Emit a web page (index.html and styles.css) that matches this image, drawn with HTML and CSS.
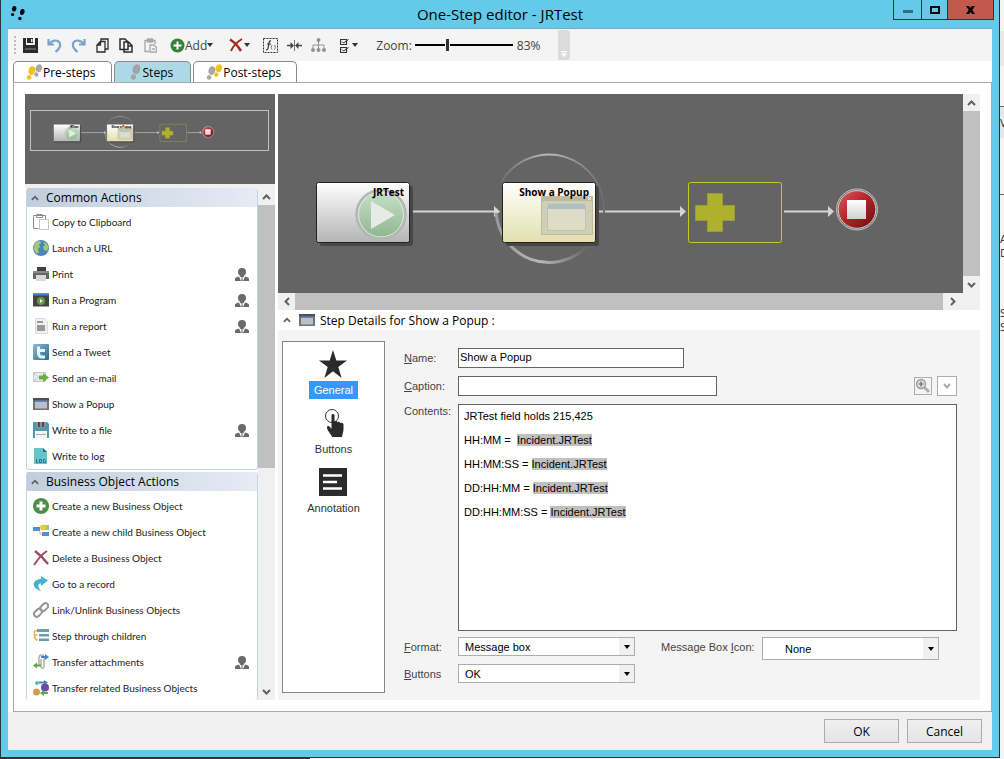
FILE: index.html
```html
<!DOCTYPE html>
<html lang="en">
<head>
<meta charset="utf-8">
<title>One-Step editor - JRTest</title>
<link rel="stylesheet" href="styles.css">
</head>
<body>
<svg class="defs" aria-hidden="true">
  <defs>
    <linearGradient id="g-grey" x1="0" y1="0" x2="0" y2="1"><stop offset="0" stop-color="#fff"/><stop offset="1" stop-color="#b4b4b4"/></linearGradient>
    <linearGradient id="g-cream" x1="0" y1="0" x2="0" y2="1"><stop offset="0" stop-color="#fff"/><stop offset="1" stop-color="#e2dfae"/></linearGradient>
    <linearGradient id="g-green" x1="0" y1="0" x2="0" y2="1"><stop offset="0" stop-color="#c8e2c9"/><stop offset="1" stop-color="#8fb590"/></linearGradient>
    <linearGradient id="g-red" x1="0" y1="0" x2="1" y2="1"><stop offset="0" stop-color="#e0575a"/><stop offset=".5" stop-color="#b02226"/><stop offset="1" stop-color="#6d0a0c"/></linearGradient>
    <linearGradient id="g-stop" x1="0" y1="0" x2="0" y2="1"><stop offset="0" stop-color="#fff"/><stop offset="1" stop-color="#cdd2cf"/></linearGradient>
    <linearGradient id="g-top" x1="0" y1="0" x2="1" y2="0"><stop offset="0" stop-color="#707070"/><stop offset=".45" stop-color="#bbb"/><stop offset="1" stop-color="#6c6c6c"/></linearGradient>
    <linearGradient id="g-bot" x1="0" y1="0" x2="1" y2="0"><stop offset="0" stop-color="#999"/><stop offset=".5" stop-color="#b8b8b8"/><stop offset="1" stop-color="#666"/></linearGradient>
    <linearGradient id="g-tw" x1="0" y1="0" x2="1" y2="1"><stop offset="0" stop-color="#8fb9cf"/><stop offset="1" stop-color="#2b6c8e"/></linearGradient>
    <symbol id="foot" viewBox="0 0 10 16"><ellipse cx="6" cy="5.2" rx="3.8" ry="5" transform="rotate(18 6 5.2)"/><ellipse cx="2.9" cy="13" rx="2.6" ry="2.7" transform="rotate(18 2.9 13)"/></symbol>
    <symbol id="person" viewBox="0 0 14 13"><circle cx="7" cy="4" r="4"/><path d="M5 7h4v1.500L7 10 5 8.500zM0 13v-2c0-1.500 1.500-2 4-2.500L6 13zM14 13v-2c0-1.500-1.500-2-4-2.500L8 13zM6.600 10h.8l.4 3H6.200z"/></symbol>
    <symbol id="chev-up" viewBox="0 0 9 6"><path d="M1 5 4.500 1.500 8 5" fill="none" stroke="#606060" stroke-width="2"/></symbol>
    <symbol id="chev-down" viewBox="0 0 9 6"><path d="M1 1l3.500 3.500L8 1" fill="none" stroke="#606060" stroke-width="2"/></symbol>
    <symbol id="caret" viewBox="0 0 6 4"><path d="M0 0h6L3 4z"/></symbol>
    <symbol id="window" viewBox="0 0 16 12"><rect width="16" height="12" fill="#6f7378"/><rect width="16" height="2.500" fill="#4d5156"/><rect x="2" y="3.500" width="12" height="7" fill="#b9bfc8"/><rect x="2" y="2.500" width="12" height="1.300" fill="#5b83b8"/></symbol>
    <g id="flow">
      <path d="M134 117.500h84M320 117.500h84M506 117.500h46" stroke="#d4d4d4" stroke-width="2"/>
      <path d="M216 112l6 5.500-6 5.500zM402 112l6 5.500-6 5.500zM550 112l6 5.500-6 5.500z" fill="#d4d4d4"/>
      <path d="M223.400 88A55 55 0 0 1 325.900 119" fill="none" stroke="url(#g-top)" stroke-width="2"/>
      <path d="M218.200 119A53 53 0 0 0 308.500 153" fill="none" stroke="url(#g-bot)" stroke-width="3"/>
      <rect x="42" y="92" width="93" height="60" rx="2" fill="#474747"/>
      <rect x="38.500" y="88.500" width="93" height="60" rx="2" fill="url(#g-grey)" stroke="#222"/>
      <circle cx="103" cy="120.500" r="24.500" fill="url(#g-green)" stroke="#b4b7b4" stroke-width="2.500"/>
      <circle cx="103" cy="120.500" r="22.500" fill="none" stroke="#e3e9e3" stroke-width="1"/>
      <path d="M93 107v28l24-14z" fill="#e8eae8"/>
      <text x="126" y="102" class="flow-label">JRTest</text>
      <rect x="228" y="92" width="93" height="60" rx="2" fill="#474747"/>
      <rect x="224.500" y="88.500" width="93" height="60" rx="2" fill="url(#g-cream)" stroke="#222"/>
      <rect x="263.500" y="102.500" width="51" height="38" fill="#d1cfb3" stroke="#bcbaa2"/>
      <rect x="264" y="102" width="50" height="5" fill="#babaa4"/>
      <path d="M310 103l3 3m0-3l-3 3" stroke="#fff"/>
      <rect x="269.500" y="110.500" width="38" height="26" rx="2" fill="#dedcc4" stroke="#b7c4c0"/>
      <rect x="270" y="110" width="37" height="5" fill="#adbfc2"/>
      <text x="311" y="102" class="flow-label">Show a Popup</text>
      <rect x="410.500" y="88.500" width="93" height="60" rx="2" fill="none" stroke="#c9c924"/>
      <path d="M429.500 99.500h15v12h12v15h-12v11h-15v-11h-12v-15h12z" fill="#b0b02f" stroke="#9c9c35"/>
      <circle cx="579" cy="115.500" r="20.500" fill="#777" stroke="#bdbdbd"/>
      <circle cx="579" cy="115.500" r="18.800" fill="url(#g-red)" stroke="#ccc"/>
      <rect x="569" y="106" width="19" height="19" fill="url(#g-stop)"/>
    </g>
  </defs>
</svg>

<div class="desktop">
<div class="window">
  <header class="titlebar">
    <svg class="app-icon" width="14" height="15" viewBox="0 0 14 15"><ellipse cx="3.200" cy="2.800" rx="2.200" ry="2.800" transform="rotate(14 3.200 2.800)"/><circle cx="1.600" cy="8.500" r="1.600"/><ellipse cx="11.300" cy="6" rx="2.200" ry="3" transform="rotate(14 11.300 6)"/><circle cx="8.900" cy="12.500" r="1.700"/></svg>
    <h1>One-Step editor - JRTest</h1>
    <div class="win-buttons">
      <button class="wb min" aria-label="Minimize"><svg width="10" height="8" viewBox="0 0 10 8"><path d="M0 4h10v3H0z" fill="#376b7e"/></svg></button>
      <button class="wb max" aria-label="Maximize"><svg width="10" height="8" viewBox="0 0 10 8"><path d="M1 1h8v6H1z" fill="none" stroke="#000" stroke-width="2"/></svg></button>
      <button class="wb close" aria-label="Close"><svg width="9" height="8" viewBox="0 0 9 8"><path d="M0 0h3l1.500 2L6 0h3L6.200 4 9 8H6L4.500 6 3 8H0l2.800-4z"/></svg></button>
    </div>
  </header>

  <div class="client">
    <div class="toolbar" role="toolbar" aria-label="Editor">
      <span class="grip"></span>
      <button class="tool" aria-label="Save"><svg width="15" height="15" viewBox="0 0 15 15"><path d="M0 0h3v7h9V0h3v15H0z" fill="#2b2b2b"/><path d="M4 0h6v5H4z" fill="#2b2b2b"/><path d="M8 1h1.500v3H8z" fill="#eee"/><path d="M2 10.500h11v1H2z" fill="#888"/></svg></button>
      <button class="tool" aria-label="Undo"><svg width="15" height="15" viewBox="0 0 15 15" fill="none" stroke="#7ba3ca" stroke-width="2.200"><path d="M1.500 1v5.500H7M2 6.200C5 2.500 10 1 12.500 4.500 14.500 8 11.500 11.500 8.500 14"/></svg></button>
      <button class="tool" aria-label="Redo"><svg width="15" height="15" viewBox="0 0 15 15" fill="none" stroke="#7ba3ca" stroke-width="2.200"><path d="M13.500 1v5.500H8M13 6.200C10 2.500 5 1 2.500 4.500.5 8 3.500 11.500 6.500 14"/></svg></button>
      <button class="tool" aria-label="Duplicate"><svg width="13" height="15" viewBox="0 0 13 15" fill="none" stroke="#2b2b2b" stroke-width="1.300"><path d="M5 3V1h7v10H9.500M4.500 3.500H9V14H1V7zM1 7h3.500V3.500"/></svg></button>
      <button class="tool" aria-label="Copy"><svg width="14" height="15" viewBox="0 0 14 15" fill="#f4f4f4" stroke="#2b2b2b" stroke-width="1.500"><path d="M1 1h5l3 3v7.500H1zM5 4h4.500L13 7.500V14H5zM9 4v4h4"/></svg></button>
      <button class="tool" aria-label="Paste"><svg width="13" height="15" viewBox="0 0 13 15" fill="none" stroke="#a9a9a9" stroke-width="1.400"><path d="M5 13.500H1V2.500h10V6M3.500 1h5v3h-5zM6 7h4l2.500 2.500V14H6zM8 11h3"/></svg></button>
      <button class="tool add"><svg width="15" height="15" viewBox="0 0 15 15"><circle cx="7.500" cy="7.500" r="7" fill="#338336"/><path d="M7.500 3.500v8M3.500 7.500h8" stroke="#fff" stroke-width="2"/></svg>Add<svg width="6" height="4"><use href="#caret"/></svg></button>
      <button class="tool del" aria-label="Delete"><svg width="14" height="14" viewBox="0 0 14 14" fill="none" stroke="#a02c1b"><path d="M1 1.500C5 4 9 8 12 13" stroke-width="2.500"/><path d="M13 1C8 4 4 8 2 13" stroke-width="2"/></svg><svg width="6" height="4"><use href="#caret"/></svg></button>
      <button class="tool fx" aria-label="Insert function"><svg width="15" height="15" viewBox="0 0 15 15" fill="none" stroke="#333"><path d="M.5.500h14v14H.5z" stroke-dasharray="2 1"/><path d="M8 3C6 2.500 6 5 5.500 8S5 12 3 12M4 6h4" stroke-width="1.200"/><path d="M9 7c-1 1.500-1 3 0 4.500M11.500 7c1 1.500 1 3 0 4.500" stroke="#777"/></svg></button>
      <button class="tool" aria-label="Collapse"><svg width="15" height="11" viewBox="0 0 15 11"><path d="M0 5.500h5M10 5.500h5" stroke="#444" stroke-width="1.500"/><path d="M3.500 2v7L7 5.500zM11.500 2v7L8 5.500z" fill="#444"/><path d="M7.500 0v11" stroke="#777"/></svg></button>
      <button class="tool" aria-label="Hierarchy"><svg width="15" height="14" viewBox="0 0 15 14" fill="#929292"><circle cx="7.500" cy="2" r="2"/><circle cx="2" cy="12" r="2"/><circle cx="7.500" cy="12" r="2"/><circle cx="13" cy="12" r="2"/><path d="M7.500 3v8M2 11V7h11v4" fill="none" stroke="#929292"/></svg></button>
      <button class="tool opts" aria-label="Options"><svg width="9" height="15" viewBox="0 0 9 15" fill="none" stroke="#333"><path d="M.5 1.500h6v5h-6zM.5 9.500h6v5h-6z" stroke-width="1.200"/><path d="M2 3.500l1.500 1.500 5-3.500M2 11.500L3.500 13l5-3.500"/></svg><svg width="6" height="4"><use href="#caret"/></svg></button>
      <label class="zoom">Zoom: <input type="range" min="0" max="100" value="32"></label>
      <output class="pct">83%</output>
      <button class="overflow" aria-label="More tools"><svg width="6" height="6" viewBox="0 0 6 6" fill="#fff"><path d="M0 0h6v1.300H0zM0 2.500h6L3 6z"/></svg></button>
    </div>

    <nav class="tabs" role="tablist">
      <button class="tab pre" role="tab"><svg width="17" height="16" viewBox="0 0 17 16"><use href="#foot" x="7" y="0" width="10" height="13" fill="#a9a9a9"/><use href="#foot" x="0" y="2" width="10" height="14" fill="#f3c11b"/></svg>Pre-steps</button>
      <button class="tab active" role="tab" aria-selected="true"><svg width="11" height="16" viewBox="0 0 10 16" fill="#a3a3a3"><use href="#foot" width="10" height="16"/></svg><span>Steps</span></button>
      <button class="tab post" role="tab"><svg width="17" height="16" viewBox="0 0 17 16"><use href="#foot" x="0" y="2" width="10" height="14" fill="#a9a9a9"/><use href="#foot" x="7" y="0" width="10" height="13" fill="#f3c11b"/></svg>Post-steps</button>
    </nav>

    <main class="panel">
      <aside class="side">
        <svg class="minimap" role="img" aria-label="Overview"><rect x="5.500" y="16.500" width="238" height="40" fill="none" stroke="#c0c0c0"/><use href="#flow" transform="translate(17.500 5) scale(.286)"/></svg>
        <div class="list-wrap">
          <div class="list">
            <section class="group">
              <h2><svg width="8" height="6"><use href="#chev-up"/></svg>Common Actions</h2>
              <ul>
                <li><svg width="16" height="16" viewBox="0 0 16 16" fill="none" stroke="#8d8d8d"><path d="M5.500 14.500h-5v-13h12V5M3.500 3.500v-3h6v3z"/><path d="M6.500 5.500h9v10h-9z" stroke-dasharray="1 1"/></svg>Copy to Clipboard</li>
                <li><svg width="16" height="16" viewBox="0 0 16 16"><circle cx="8" cy="8" r="8" fill="#4a87b8"/><path d="M3 2C6 0 8 1 8 3L6 5 7 7 5 9 6 12 4 14C1 11 0 8 1 5zM10 2c3 0 5 3 5.500 5.500L14 11l-3-1-1-3 2-2z" fill="#a5c77a"/></svg>Launch a URL</li>
                <li><svg width="16" height="16" viewBox="0 0 16 16"><path d="M4 1h9v4H4z" fill="#3f3f3f"/><path d="M0 5h16v8H0z" fill="#666"/><path d="M0 5h16v2H0z" fill="#8a8a8a"/><path d="M3 9h10v6H3z" fill="#d9d9d9"/></svg><span>Print</span><svg class="who" width="14" height="13"><use href="#person"/></svg></li>
                <li><svg width="16" height="16" viewBox="0 0 16 16"><path d="M0 1.500h16v13H0z" fill="#444"/><path d="M0 1.500h16v2H0z" fill="#3f82cc"/><circle cx="8" cy="9" r="4" fill="#5c9c3c"/><path d="M7 7v4l3-2z" fill="#eee"/></svg><span>Run a Program</span><svg class="who" width="14" height="13"><use href="#person"/></svg></li>
                <li><svg width="16" height="16" viewBox="0 0 16 16"><path d="M2.500.500h9l3 3v12h-12z" fill="#f0f0f0" stroke="#ddd"/><path d="M4 3h6v2H4zM4 7h8v6H4z" fill="#949a97"/></svg><span>Run a report</span><svg class="who" width="14" height="13"><use href="#person"/></svg></li>
                <li><svg width="16" height="16" viewBox="0 0 16 16"><rect width="16" height="16" rx="1" fill="url(#g-tw)"/><path d="M5.500 2.500V9c0 3 1 4 3.500 4h3M5.500 6.500H12" fill="none" stroke="#e4f6fc" stroke-width="3"/></svg>Send a Tweet</li>
                <li><svg width="16" height="16" viewBox="0 0 16 16"><path d="M.5 2.500h12v9H.5zM.5 3l5 4-5 4" fill="#eee" stroke="#c6c6c6"/><path d="M6 5.500h4V3l6 4.500-6 4.500V9.500H6z" fill="#6aad43"/></svg>Send an e-mail</li>
                <li><svg width="16" height="12"><use href="#window"/></svg>Show a Popup</li>
                <li><svg width="16" height="16" viewBox="0 0 16 16"><path d="M0 0h14l2 2v14H0z" fill="#4e9bb0"/><path d="M3 0h10v6H3z" fill="#8f8f93"/><path d="M5 0h2v5H5zM9 0h2v5H9z" fill="#4c4c55"/><path d="M2 9h12v7H2z" fill="#f5f5f5"/><path d="M3 12h10v1H3z" fill="#aaa"/></svg><span>Write to a file</span><svg class="who" width="14" height="13"><use href="#person"/></svg></li>
                <li><svg width="16" height="16" viewBox="0 0 16 16"><path d="M1 0h9l4 4v12H1z" fill="#66c4cc"/><path d="M10 0v4h4z" fill="#2b7180"/><path d="M3.500 11v3.500H5M6.500 11.500h2v3h-2zM12.500 11.500H10.500v3h2V13" fill="none" stroke="#2d7580"/></svg>Write to log</li>
              </ul>
            </section>
            <section class="group">
              <h2><svg width="8" height="6"><use href="#chev-up"/></svg>Business Object Actions</h2>
              <ul>
                <li><svg width="16" height="16" viewBox="0 0 16 16"><circle cx="8" cy="8" r="8" fill="#4c8f48"/><path d="M8 3.500v9M3.500 8h9" stroke="#fff" stroke-width="3"/></svg>Create a new Business Object</li>
                <li><svg width="16" height="16" viewBox="0 0 16 16"><path d="M0 3h7v4H0z" fill="#4f8fd6"/><path d="M9 1h7v5H9z" fill="#8fd07a"/><circle cx="10" cy="3.500" r="3" fill="#f3c64a"/><path d="M9 8h7v4H9z" fill="#4f8fd6"/><path d="M7 7v3h2" stroke="#bbb" fill="none"/></svg>Create a new child Business Object</li>
                <li><svg width="16" height="16" viewBox="0 0 16 16" fill="none" stroke="#984f63"><path d="M2 1c4 3 9 8 13 13" stroke-width="2.400"/><path d="M14 1C9 4 5 9 1 15" stroke-width="2"/></svg>Delete a Business Object</li>
                <li><svg width="16" height="16" viewBox="0 0 16 16"><path d="M8 0l7 4.500L8 10V7.500C5 7.500 4 10 8 15 2 13 0 10 1 7s4-4 7-4z" fill="#46b2d2"/></svg>Go to a record</li>
                <li><svg width="16" height="16" viewBox="0 0 16 16" fill="none" stroke="#959595" stroke-width="2"><rect x="6.500" y="2.500" width="9" height="5.500" rx="2.700" transform="rotate(-45 11 5)"/><rect x=".5" y="8" width="9" height="5.500" rx="2.700" transform="rotate(-45 5 10.700)"/></svg>Link/Unlink Business Objects</li>
                <li><svg width="16" height="16" viewBox="0 0 16 16"><path d="M4 1h12v3H4zM6 6h10v2.500H6zM6 10.500h10V13H6z" fill="#6d9eb5"/><path d="M4 2.500C1 2.500 1 4 1.500 7h3M1.500 7c0 4 1 5 3 5" fill="none" stroke="#e3b04d" stroke-width="1.500"/></svg>Step through children</li>
                <li><svg width="16" height="16" viewBox="0 0 16 16"><path d="M6 12V4c0-4 5-4 5 0v8c0 3-3 3-3 0V5" fill="none" stroke="#b0b0b0" stroke-width="1.500"/><path d="M8 2h4V0l4 3-4 3V4H8z" fill="#4484bf"/><path d="M8 12.500v-2H4v-2l-4 3 4 3v-2z" fill="#5fa546"/></svg><span>Transfer attachments</span><svg class="who" width="14" height="13"><use href="#person"/></svg></li>
                <li><svg width="16" height="16" viewBox="0 0 16 16"><circle cx="4" cy="3" r="1.900" fill="#4fbcae"/><path d="M6 1.500h5V0l4 2.500L11 5V3.500H6z" fill="#4484bf"/><circle cx="12" cy="7.500" r="4" fill="#6c4aa8"/><circle cx="3.500" cy="12" r="3.500" fill="#cf9d50"/><path d="M15 12h-4v-2l-4 3 4 3v-2h4z" fill="#5fa546"/></svg>Transfer related Business Objects</li>
              </ul>
            </section>
          </div>
          <div class="vbar">
            <button aria-label="Scroll up"><svg width="9" height="6"><use href="#chev-up"/></svg></button>
            <div class="vtrack"><div class="thumb side-thumb"></div></div>
            <button aria-label="Scroll down"><svg width="9" height="6"><use href="#chev-down"/></svg></button>
          </div>
        </div>
      </aside>

      <section class="work">
        <div class="canvas-grid">
          <svg class="canvas" role="img" aria-label="Step flow"><use href="#flow"/></svg>
          <div class="vbar">
            <button aria-label="Scroll up"><svg width="9" height="6"><use href="#chev-up"/></svg></button>
            <div class="vtrack"><div class="thumb full"></div></div>
            <button aria-label="Scroll down"><svg width="9" height="6"><use href="#chev-down"/></svg></button>
          </div>
          <div class="hbar">
            <button aria-label="Scroll left"><svg width="6" height="9" viewBox="0 0 6 9"><path d="M5 1 1.500 4.500 5 8" fill="none" stroke="#606060" stroke-width="2"/></svg></button>
            <div class="thumb hthumb"></div>
            <button aria-label="Scroll right"><svg width="6" height="9" viewBox="0 0 6 9"><path d="M1 1l3.500 3.500L1 8" fill="none" stroke="#606060" stroke-width="2"/></svg></button>
          </div>
          <div class="corner"></div>
        </div>
        <h2 class="details-head"><svg width="8" height="6"><use href="#chev-up"/></svg><svg width="16" height="12"><use href="#window"/></svg>Step Details for Show a Popup :</h2>
        <div class="details">
          <nav class="pages">
            <button class="page current"><svg width="28" height="28" viewBox="0 0 28 28" fill="#2b2b2b"><path d="M14 0l3.300 10.500H28l-8.700 6.400L22.600 28 14 21.300 5.400 28l3.300-11.100L0 10.500h10.700z"/></svg><span>General</span></button>
            <button class="page"><svg width="28" height="28" viewBox="0 0 28 28"><circle cx="12" cy="7" r="6.500" fill="none" stroke="#333"/><path d="M11.500 6.500c0-2 3-2 3 0V13c.5-1.500 2.700-1 2.900.3 1-1 2.600-.3 2.600.8 1-.8 3.500-.2 3.500 1.300v5c0 2-1 4-1.500 7.600H12c-.5-3-4-5-5-9-.3-2.500 2-2.500 3-1l1.500 2z" fill="#2b2b2b"/></svg><span>Buttons</span></button>
            <button class="page"><svg width="28" height="28" viewBox="0 0 28 28"><path d="M0 0h28v28H0z" fill="#2b2b2b"/><path d="M4 7.500h19M4 14h14M4 20.500h19" stroke="#fff" stroke-width="2.500"/></svg><span>Annotation</span></button>
          </nav>
          <form class="form">
            <label for="name"><u>N</u>ame:</label>
            <input id="name" class="text name" type="text" value="Show a Popup">
            <label for="caption"><u>C</u>aption:</label>
            <div class="row">
              <input id="caption" class="text caption" type="text">
              <div class="aux">
                <button type="button" class="lens" aria-label="Zoom text"><svg width="16" height="16" viewBox="0 0 16 16"><path d="M9 9l5 5" stroke="#b0b0b0" stroke-width="3"/><circle cx="6" cy="6" r="4.500" fill="#ddd" stroke="#999" stroke-width="1.300"/><path d="M6 3.500v5M3.500 6h5" stroke="#666" stroke-width="1.200"/></svg></button>
                <button type="button" class="pick" aria-label="Insert"><svg width="8" height="6" viewBox="0 0 8 6"><path d="M1 1l3 3.500L7 1" fill="none" stroke="#aaa" stroke-width="2"/></svg></button>
              </div>
            </div>
            <label id="contents-label">Contents:</label>
            <div class="contents" role="textbox" aria-multiline="true" aria-labelledby="contents-label" contenteditable="true" spellcheck="false">
              <p>JRTest field holds 215,425</p>
              <p>HH:MM = &nbsp;<mark>Incident.JRTest</mark></p>
              <p>HH:MM:SS = <mark>Incident.JRTest</mark></p>
              <p>DD:HH:MM = <mark>Incident.JRTest</mark></p>
              <p>DD:HH:MM:SS = <mark>Incident.JRTest</mark></p>
            </div>
            <label for="format"><u>F</u>ormat:</label>
            <div class="row">
              <span class="select"><select id="format"><option>Message box</option></select><svg width="6" height="4"><use href="#caret"/></svg></span>
              <label for="icon" class="icon-label">Message Box <u>I</u>con:</label>
              <span class="select tall"><select id="icon"><option>None</option></select><svg width="6" height="4"><use href="#caret"/></svg></span>
            </div>
            <label for="btns"><u>B</u>uttons</label>
            <span class="select"><select id="btns"><option>OK</option></select><svg width="6" height="4"><use href="#caret"/></svg></span>
          </form>
        </div>
      </section>
    </main>

    <footer class="footer"><button>OK</button><button>Cancel</button></footer>
  </div>
</div>
<div class="behind" aria-hidden="true"><span class="first">V</span><span>A</span><span>D</span><span class="last">S</span><span>S</span></div>
</div>
</body>
</html>
```
FILE: styles.css
```css
* { box-sizing: border-box; }
body { margin: 0; font-family: "Open Sans", "Noto Sans", sans-serif; font-size: 12px; color: #000; background: #f4f4f4; }
button { margin: 0; padding: 0; border: 0; background: none; font: inherit; color: inherit; }
h1, h2, ul, p { margin: 0; padding: 0; font-weight: normal; }
svg { display: block; flex: none; }
.defs { position: absolute; width: 0; height: 0; }

.desktop { display: grid; grid-template-columns: minmax(0, 1fr) 4px; min-height: 100vh; padding-bottom: 1px; background: linear-gradient(#333, #333) left bottom / 310px 1px no-repeat, #f4f4f4; }
.behind { display: flex; flex-direction: column; overflow: hidden; font-size: 11px; line-height: 14px; color: #333; background: linear-gradient(transparent 31px, #e8e8e8 31px, #e8e8e8 66px, transparent 66px, transparent 106px, #666 106px, #666 107px, #dceaf0 107px, #dceaf0 138px, transparent 138px, transparent 194px, #666 194px, #666 195px, transparent 195px); }
.behind .first { margin: 116px 0 102px; }
.behind .last { margin-top: 46px; }

.window { display: flex; flex-direction: column; padding: 0 7px 7px; border: solid #2b3438; border-width: 0 1px 1px; background: #65c9ea; }
.titlebar { display: grid; grid-template-columns: 100px 1fr 100px; height: 28px; }
.app-icon { margin: 6px 0 0 3px; }
.titlebar h1 { text-align: center; font-size: 15px; line-height: 28px; }
.win-buttons { display: flex; height: 20px; justify-content: flex-end; margin-right: -2px; }
.wb { display: flex; align-items: center; justify-content: center; border: solid #26373e; border-width: 0 0 1px 1px; }
.wb.min { width: 28px; }
.wb.max { width: 26px; }
.wb.close { width: 47px; border-right-width: 1px; background: #c2594f; }

.client { flex: 1; display: flex; flex-direction: column; border-top: 1px solid #76a9c8; background: #fff; }
.toolbar { display: flex; align-items: center; height: 32px; background: #f4f4f4; color: #444; }
.grip { width: 2px; height: 18px; margin: 0 2px 0 6px; background: repeating-linear-gradient(#bbb 0 2px, transparent 2px 4px); }
.tool { display: flex; align-items: center; justify-content: center; width: 24px; height: 24px; fill: #333; }
.tool.add, .tool.del, .tool.opts { width: auto; }
.tool.add { margin-left: 8px; }
.tool.del { margin-left: 16px; gap: 1px; }
.tool.fx { margin-left: 8px; }
.tool.opts { margin-left: 10px; gap: 3px; }
.zoom { display: flex; align-items: center; gap: 3px; margin-left: 18px; }
.zoom input { appearance: none; width: 98px; height: 14px; margin: 0; background: linear-gradient(#000, #000) center / 100% 2px no-repeat; }
.zoom input::-webkit-slider-thumb { appearance: none; width: 5px; height: 12px; border: solid #f4f4f4; border-width: 0 1px; background: #333; }
.pct { margin-left: 4px; }
.overflow { display: flex; align-items: flex-end; justify-content: center; width: 12px; height: 30px; margin-left: 17px; padding-bottom: 3px; background: #dcdcdc; border-radius: 0 3px 3px 0; }

.tabs { display: flex; gap: 2px; padding: 0 5px; height: 21px; }
.tab { display: flex; align-items: center; justify-content: center; border: 1px solid #8a8a8a; border-bottom: 0; border-radius: 5px 5px 0 0; background: #fff; padding: 0 15px 0 12px; }
.tab.active { background: #add8e6; gap: 2px; padding: 0 17px 0 15px; }

.panel { flex: 1; display: flex; margin-left: 5px; padding: 11px; border: 1px solid #a9a9a9; gap: 3px; }
.side { display: flex; flex-direction: column; width: 250px; background: #f0f0f0; }
.minimap { width: 100%; height: 90px; background: #646464; }
.list-wrap { display: flex; flex: 1; margin-top: 4px; }
.list { flex: 1; background: #fff; padding-left: 1px; }
.group { border: solid #c7d3e3; border-width: 0 1px 1px; border-radius: 3px; height: 282px; margin-bottom: 2px; }
.group:last-child { height: auto; border-bottom: 0; margin: 0; }
.group h2 { display: flex; align-items: center; gap: 7px; height: 19px; padding-left: 4px; font-size: 12px; background: linear-gradient(90deg, #c0cedd, #e6ebf4); }
.group ul { list-style: none; padding: 2px 8px 0 6px; }
.group li { display: flex; align-items: center; gap: 3px; height: 26px; font-family: Lato, "Open Sans", sans-serif; font-size: 10px; line-height: 16px; color: #222; }
.who { margin-left: auto; fill: #6a6a6a; }
.group:last-child ul { height: 209px; }

.vbar { display: flex; flex-direction: column; width: 17px; background: #f0f0f0; }
.vbar button, .hbar button { display: flex; align-items: center; justify-content: center; width: 17px; height: 17px; }
.vtrack { flex: 1; }
.thumb { background: #c0c0c0; }
.side-thumb { height: 55%; }
.thumb.full { height: 100%; }

.work { flex: 1; min-width: 0; display: flex; flex-direction: column; }
.canvas-grid { display: grid; grid-template-columns: minmax(0, 1fr) 17px; grid-template-rows: 199px 17px; background: #f0f0f0; }
.canvas { width: 100%; height: 199px; background: #646464; }
.flow-label { font: bold 10px "Open Sans", "Noto Sans", sans-serif; text-anchor: end; }
.hbar { display: flex; }
.hbar button:last-child { width: 20px; }
.hthumb { flex: 1; }
.details-head { display: flex; align-items: center; gap: 5px; height: 20px; padding-left: 5px; font-size: 12px; }
.details-head svg:first-child { margin-right: 3px; }
.details { flex: 1; display: flex; gap: 19px; padding: 11px 23px 7px 4px; background: #f4f4f4; font-family: "Liberation Sans", Arial, sans-serif; font-size: 11px; }
.pages { width: 103px; border: 1px solid #84848c; background: #fff; padding-top: 8px; display: flex; flex-direction: column; align-items: center; gap: 10px; }
.page { display: flex; flex-direction: column; align-items: center; gap: 3px; color: #333; }
.page span { line-height: 18px; padding: 0 5px; }
.page.current span { background: #3399ff; color: #fff; }

.form { flex: 1; display: grid; grid-template-columns: 54px minmax(0, 1fr); grid-template-rows: 20px 20px 1fr 19px 19px; row-gap: 8px; padding: 7px 0 10px; color: #000; }
.form label { line-height: 20px; color: #444; }
#contents-label { line-height: 14px; }
.text { height: 20px; border: 1px solid #646464; background: #fff; padding: 0 1px 2px; font: inherit; color: #000; }
.name { width: 226px; }
.caption { width: 259px; }
.row { display: flex; align-items: flex-start; }
.aux { display: flex; align-items: center; gap: 5px; margin-left: auto; }
.aux button { display: flex; align-items: center; justify-content: center; border: 1px solid #adadad; }
.lens { width: 18px; height: 18px; }
.pick { width: 20px; height: 20px; background: #fff; }
.contents { margin-bottom: -2px; border: 1px solid #646464; background: #fff; padding: 5px; line-height: 13px; }
.contents p { margin-bottom: 11px; }
.contents mark { background: #c0c0c0; color: #000; }
.select { position: relative; width: 177px; height: 19px; }
.select select { appearance: none; display: block; width: 100%; height: 100%; border: 1px solid #adadad; border-radius: 0; padding: 0 20px 0 6px; background: linear-gradient(#f0f0f0, #f0f0f0) right / 15px 100% no-repeat, #fff; font: inherit; color: #000; }
.select svg { position: absolute; right: 5px; top: 50%; margin-top: -2px; pointer-events: none; }
.select.tall { height: 23px; }
.select.tall select { padding-left: 22px; }
.icon-label { margin-left: 26px; width: 101px; }

.footer { display: flex; justify-content: flex-end; align-items: center; gap: 8px; height: 38px; padding-right: 10px; background: #f0f0f0; }
.footer button { width: 75px; height: 24px; border: 1px solid #acacac; background: linear-gradient(#f0f0f0, #e5e5e5); }
```
